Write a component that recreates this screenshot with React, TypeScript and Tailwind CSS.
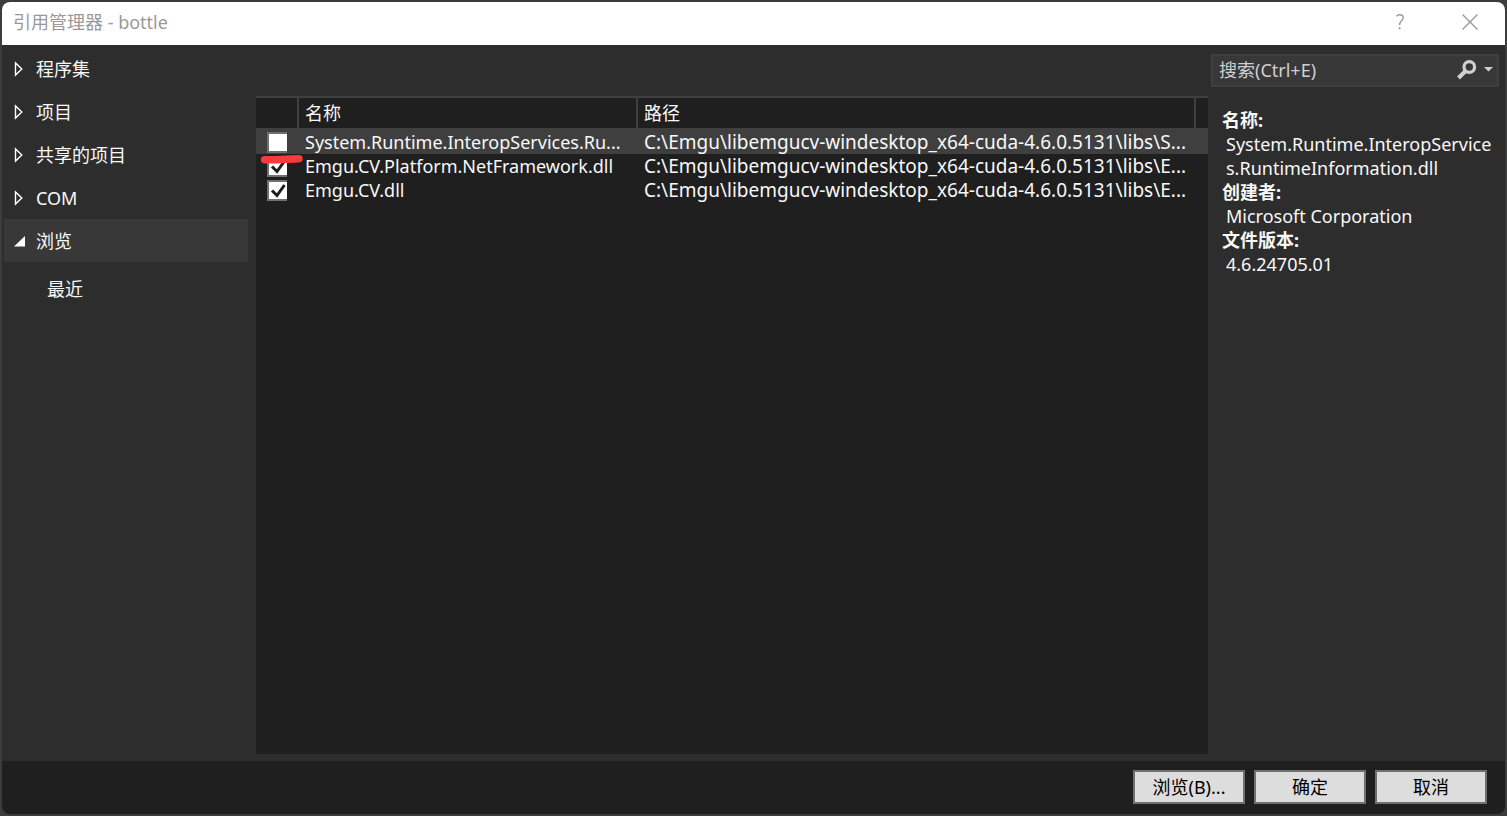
import { useState } from 'react'

interface Reference {
    name: string
    path: string
    checked: boolean
}

const categories = ['程序集', '项目', '共享的项目', 'COM', '浏览']

const initialReferences: Reference[] = [
    {
        name: 'System.Runtime.InteropServices.Ru...',
        path: 'C:\\Emgu\\libemgucv-windesktop_x64-cuda-4.6.0.5131\\libs\\S...',
        checked: false,
    },
    {
        name: 'Emgu.CV.Platform.NetFramework.dll',
        path: 'C:\\Emgu\\libemgucv-windesktop_x64-cuda-4.6.0.5131\\libs\\E...',
        checked: true,
    },
    {
        name: 'Emgu.CV.dll',
        path: 'C:\\Emgu\\libemgucv-windesktop_x64-cuda-4.6.0.5131\\libs\\E...',
        checked: true,
    },
]

const details = [
    { label: '名称:', value: 'System.Runtime.InteropServices.RuntimeInformation.dll' },
    { label: '创建者:', value: 'Microsoft Corporation' },
    { label: '文件版本:', value: '4.6.24705.01' },
]

const TitleBar = () => (
    <header className="flex h-[43px] shrink-0 items-center bg-white pb-[3px] pl-[11px] text-[#999999]">
        <h1 className="flex-1">引用管理器 - bottle</h1>
        <button aria-label="帮助" className="flex h-full w-[70px] items-center justify-center">
            <svg width="10" height="16" viewBox="0 0 10 16" fill="none" stroke="currentColor" strokeWidth="1.4">
                <path d="M1.5 2.2C2.3 1.2 3.5 .8 4.8 .8C6.9 .8 8.2 1.9 8.2 3.7C8.2 6.8 4.6 7 4.6 11" />
                <path d="M4.6 13.2v2" strokeWidth="1.8" />
            </svg>
        </button>
        <button aria-label="关闭" className="flex h-full w-[70px] items-center justify-center">
            <svg width="16" height="16" viewBox="0 0 16 16" fill="none" stroke="currentColor" strokeWidth="1.4">
                <path d="M.5 .5l15 15M15.5 .5l-15 15" />
            </svg>
        </button>
    </header>
)

const Sidebar = () => {
    const [selected, setSelected] = useState('浏览')

    return (
        <nav className="w-[246px] shrink-0 pt-[2px] pl-[2px]">
            {categories.map((category) => (
                <button
                    key={category}
                    onClick={() => setSelected(category)}
                    className={`flex h-[43px] w-full items-center gap-[10px] pl-[10px] text-left ${selected === category ? 'bg-[#383838]' : ''}`}
                >
                    {selected === category ? (
                        <svg width="12" height="16" viewBox="0 0 12 16" fill="#ffffff">
                            <path d="M11 3v10.5H0z" />
                        </svg>
                    ) : (
                        <svg width="12" height="16" viewBox="0 0 12 16" fill="none" stroke="#ffffff" strokeWidth="1.4">
                            <path d="M1.5 2v12L7.8 8z" />
                        </svg>
                    )}
                    <span>{category}</span>
                </button>
            ))}
            <button className="flex h-[53px] w-full items-center pl-[43px] text-left">最近</button>
        </nav>
    )
}

const ReferenceTable = () => {
    const [references, setReferences] = useState(initialReferences)

    const toggle = (index: number) => {
        setReferences(references.map((r, i) => (i === index ? { ...r, checked: !r.checked } : r)))
    }

    return (
        <div className="mt-[51px] mb-[7px] ml-2 min-w-0 flex-1 bg-[#1f1f1f]">
            <table className="w-full table-fixed border-separate border-spacing-0">
                <colgroup>
                    <col className="w-[43px]" />
                    <col className="w-[339px]" />
                    <col />
                    <col className="w-[12px]" />
                </colgroup>
                <thead>
                    <tr className="h-[34px] text-left">
                        <th className="border-y-2 border-r-2 border-[#3f3f3f] p-0" aria-label="选择" />
                        <th className="border-y-2 border-r-2 border-[#3f3f3f] px-[6px] py-0 font-normal">名称</th>
                        <th className="border-y-2 border-r-2 border-[#3f3f3f] px-[6px] py-0 font-normal">路径</th>
                        <th className="border-y-2 border-[#3f3f3f] p-0" aria-hidden="true" />
                    </tr>
                </thead>
                <tbody>
                    {references.map((reference, index) => (
                        <tr key={reference.name} className={`h-6 ${index === 0 ? 'bg-[#3f3f3f]' : ''}`}>
                            <td className="p-0 pl-[11px]">
                                <div className="relative h-[21px] w-5">
                                    <input
                                        type="checkbox"
                                        aria-label={reference.name}
                                        checked={reference.checked}
                                        onChange={() => toggle(index)}
                                        className="block h-full w-full appearance-none border-2 border-r-0 border-[#707070] bg-white"
                                    />
                                    {reference.checked && (
                                        <svg
                                            className="pointer-events-none absolute inset-0"
                                            width="20"
                                            height="21"
                                            viewBox="0 0 20 21"
                                            fill="none"
                                            stroke="#1e1e1e"
                                            strokeWidth="3"
                                        >
                                            <path d="M5 10.5l5 5L17.5 5" />
                                        </svg>
                                    )}
                                    {/* red pen stroke under the unchecked assembly */}
                                    {index === 0 && (
                                        <svg
                                            className="pointer-events-none absolute top-5 -left-2 z-10"
                                            width="46"
                                            height="14"
                                            viewBox="0 0 46 14"
                                            fill="none"
                                            stroke="#f93a3a"
                                            strokeWidth="7.5"
                                            strokeLinecap="round"
                                        >
                                            <path d="M5.5 7.7C15 8.2 28 7 40 6.7" />
                                        </svg>
                                    )}
                                </div>
                            </td>
                            <td className="px-[6px] py-0 whitespace-nowrap">{reference.name}</td>
                            <td className="px-[6px] py-0 text-[19px] leading-6 whitespace-nowrap">{reference.path}</td>
                            <td className="p-0" />
                        </tr>
                    ))}
                </tbody>
            </table>
        </div>
    )
}

const DetailsPanel = () => (
    <aside className="w-[297px] shrink-0 pt-[9px] pr-[6px] pl-[3px]">
        <div className="flex h-[33px] items-center border-2 border-[#3f3f3f] bg-[#383838] pb-[2px] pl-[6px] text-[#d0d0d0]">
            <input
                type="text"
                aria-label="搜索"
                placeholder="搜索(Ctrl+E)"
                className="min-w-0 flex-1 bg-transparent outline-none placeholder:text-[#d0d0d0]"
            />
            <button aria-label="搜索" className="flex w-6 justify-center">
                <svg width="20" height="20" viewBox="0 0 20 20" fill="none" stroke="currentColor">
                    <circle cx="12.3" cy="7" r="5.3" strokeWidth="3.2" />
                    <path d="M8.5 11l-7 7" strokeWidth="4" />
                </svg>
            </button>
            <button aria-label="搜索选项" className="flex w-[18px] justify-center">
                <svg width="9" height="5" viewBox="0 0 9 5" fill="currentColor">
                    <path d="M0 0h9L4.5 4.5z" />
                </svg>
            </button>
        </div>
        <dl className="mt-[21px] pl-[11px] leading-6">
            {details.map((item) => (
                <div key={item.label}>
                    <dt className="font-bold">{item.label}</dt>
                    <dd className="pl-1 break-all">{item.value}</dd>
                </div>
            ))}
        </dl>
    </aside>
)

const DialogButton = ({ label }: { label: string }) => (
    <button className="h-[34px] w-28 border-2 border-[#707070] bg-[#dddddd] text-black">{label}</button>
)

export default function App() {
    return (
        <div className="flex min-h-screen bg-[#3c3c3c] p-[2px] font-['Noto_Sans','Noto_Sans_CJK_SC',sans-serif] text-[18px] leading-6 text-[#f8f8f8]">
            <div className="flex min-w-0 flex-1 flex-col overflow-hidden rounded-lg bg-[#2d2d2d]">
                <TitleBar />
                <main className="flex flex-1">
                    <Sidebar />
                    <ReferenceTable />
                    <DetailsPanel />
                </main>
                <footer className="flex h-[53px] shrink-0 items-start justify-end gap-[9px] bg-[#1f1f1f] pt-[9px] pr-[18px]">
                    <DialogButton label="浏览(B)..." />
                    <DialogButton label="确定" />
                    <DialogButton label="取消" />
                </footer>
            </div>
        </div>
    )
}
